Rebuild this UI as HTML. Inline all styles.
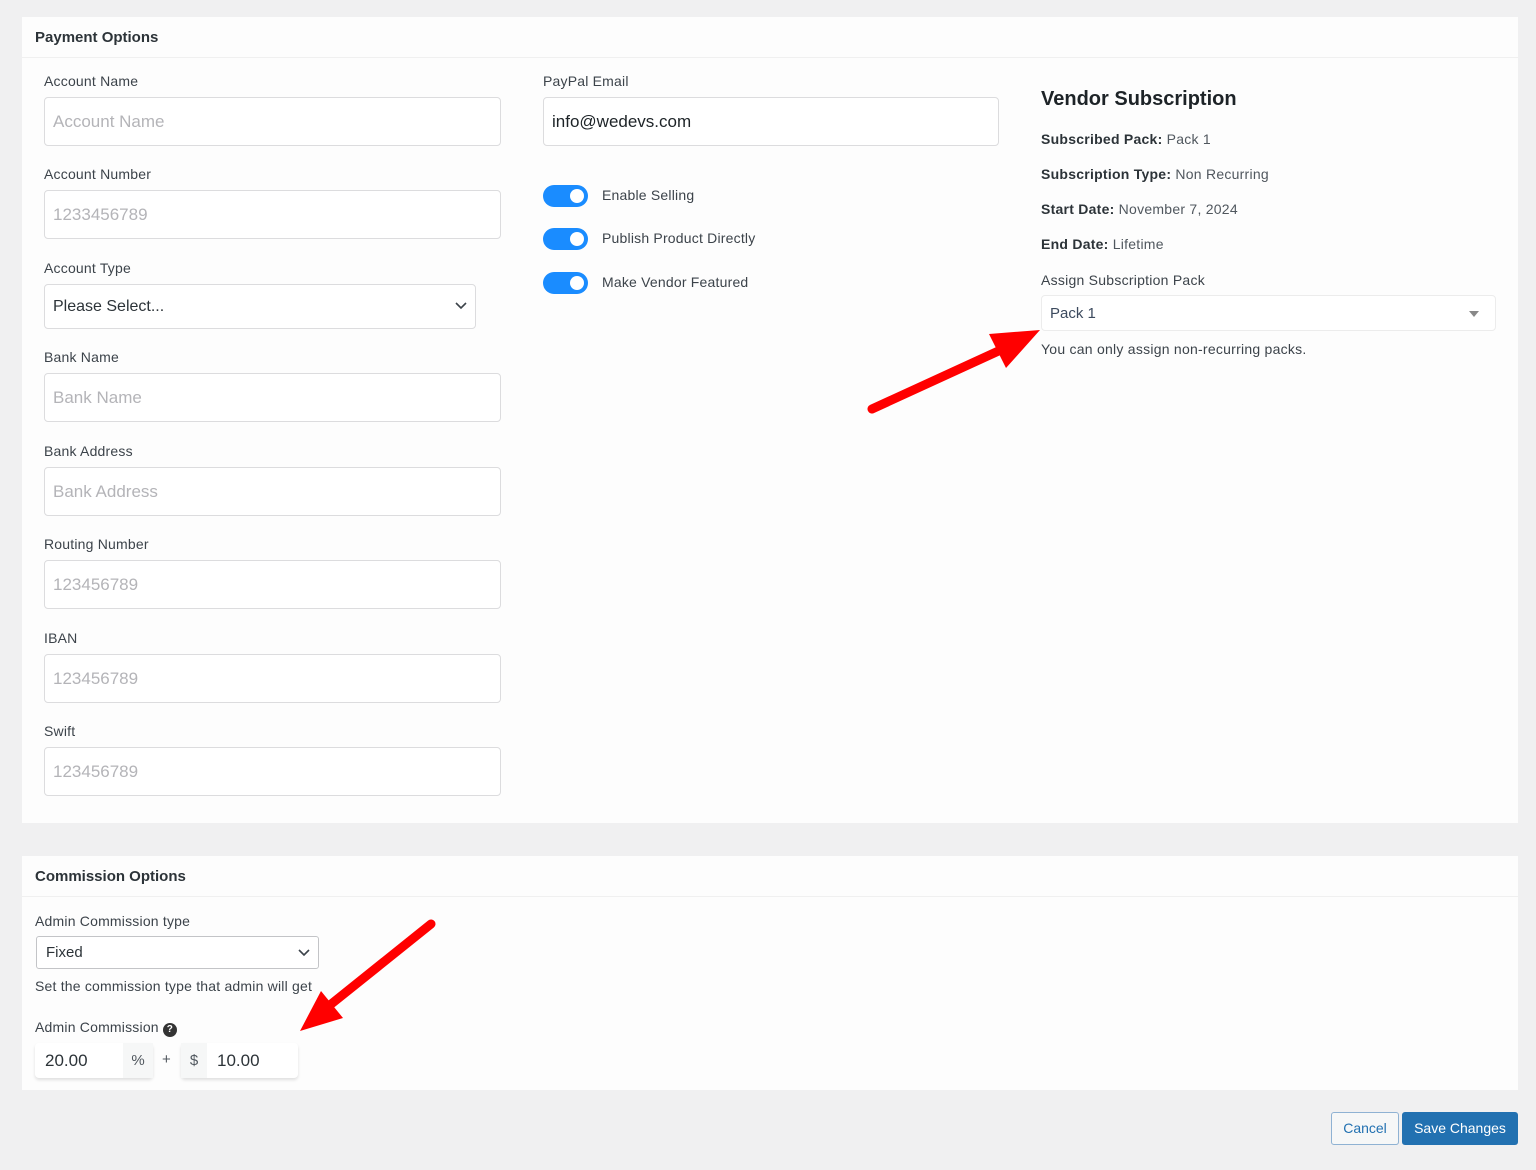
<!DOCTYPE html>
<html><head><meta charset="utf-8"><style>
*{box-sizing:border-box;margin:0;padding:0}
body{width:1536px;height:1170px;background:#f0f0f1;font-family:"Liberation Sans",sans-serif;color:#3c434a;position:relative;overflow:hidden}
.a{position:absolute}
.panel{position:absolute;left:22px;width:1496px;background:#fdfdfd}
.hdr{position:absolute;left:0;width:100%;border-bottom:1px solid #f0f0f0;font-weight:bold;font-size:15px;color:#2c3338;padding-left:13px}
.lbl{position:absolute;font-size:14px;color:#3c434a;letter-spacing:.2px}
.inp{position:absolute;left:44px;width:457px;height:49px;border:1px solid #dcdcde;border-radius:4px;background:#fff;font-size:17px;color:#b4b4b8;padding:14px 0 0 8px}
.tog{position:absolute;left:543px;width:45px;height:22px;border-radius:11px;background:#1a8cff}
.tog:after{content:"";position:absolute;right:4px;top:4px;width:14px;height:14px;border-radius:50%;background:#fff}
.tl{position:absolute;left:602px;font-size:14px;color:#3c434a;letter-spacing:.2px}
.vs{position:absolute;left:1041px;font-size:14px;color:#50575e;letter-spacing:.25px}
.vs b{color:#2c3338}
</style></head><body>
<div class="panel" style="top:17px;height:806px">
<div class="hdr" style="top:0;height:41px;line-height:41px">Payment Options</div>
</div>
<div class="lbl" style="left:44px;top:73px">Account Name</div>
<div class="inp" style="top:97px">Account Name</div>
<div class="lbl" style="left:44px;top:166px">Account Number</div>
<div class="inp" style="top:190px">1233456789</div>
<div class="lbl" style="left:44px;top:260px">Account Type</div>
<div class="inp" style="top:284px;width:432px;height:45px;color:#2c3338;font-size:16px;padding-top:13px">Please Select...
<svg class="a" style="right:8px;top:17px" width="12" height="8" viewBox="0 0 12 8"><path d="M1 1l5 5 5-5" stroke="#3c434a" stroke-width="1.6" fill="none"/></svg></div>
<div class="lbl" style="left:44px;top:349px">Bank Name</div>
<div class="inp" style="top:373px">Bank Name</div>
<div class="lbl" style="left:44px;top:443px">Bank Address</div>
<div class="inp" style="top:467px">Bank Address</div>
<div class="lbl" style="left:44px;top:536px">Routing Number</div>
<div class="inp" style="top:560px">123456789</div>
<div class="lbl" style="left:44px;top:630px">IBAN</div>
<div class="inp" style="top:654px">123456789</div>
<div class="lbl" style="left:44px;top:723px">Swift</div>
<div class="inp" style="top:747px">123456789</div>

<div class="lbl" style="left:543px;top:73px">PayPal Email</div>
<div class="inp" style="left:543px;top:97px;width:456px;color:#1d2327">info@wedevs.com</div>
<div class="tog" style="top:185px"></div><div class="tl" style="top:187px">Enable Selling</div>
<div class="tog" style="top:228px"></div><div class="tl" style="top:230px">Publish Product Directly</div>
<div class="tog" style="top:272px"></div><div class="tl" style="top:274px">Make Vendor Featured</div>

<div class="a" style="left:1041px;top:88px;font-size:20px;font-weight:bold;color:#1d2327">Vendor Subscription</div>
<div class="vs" style="top:131px"><b>Subscribed Pack:</b> Pack 1</div>
<div class="vs" style="top:166px"><b>Subscription Type:</b> Non Recurring</div>
<div class="vs" style="top:201px"><b>Start Date:</b> November 7, 2024</div>
<div class="vs" style="top:236px"><b>End Date:</b> Lifetime</div>
<div class="vs" style="top:272px;color:#3c434a">Assign Subscription Pack</div>
<div class="a" style="left:1041px;top:295px;width:455px;height:36px;border:1px solid #ececec;border-radius:4px;background:#fff;font-size:15px;color:#3c4a5e;padding:9px 0 0 8px">Pack 1
<svg class="a" style="right:16px;top:15px" width="10" height="6"><path d="M0 0h10L5 6z" fill="#888"/></svg></div>
<div class="vs" style="top:341px;color:#3c434a">You can only assign non-recurring packs.</div>

<div class="panel" style="top:856px;height:234px">
<div class="hdr" style="top:0;height:41px;line-height:41px">Commission Options</div>
</div>
<div class="lbl" style="left:35px;top:913px">Admin Commission type</div>
<div class="a" style="left:36px;top:936px;width:283px;height:33px;border:1px solid #c3c4c7;border-radius:3px;background:#fff;font-size:15px;color:#2c3338;padding:7px 0 0 9px">Fixed
<svg class="a" style="right:8px;top:12px" width="12" height="8" viewBox="0 0 12 8"><path d="M1 1l5 5 5-5" stroke="#3c434a" stroke-width="1.6" fill="none"/></svg></div>
<div class="lbl" style="left:35px;top:978px">Set the commission type that admin will get</div>
<div class="lbl" style="left:35px;top:1019px">Admin Commission <span style="display:inline-block;width:14px;height:14px;border-radius:50%;background:#333;color:#fff;font-size:10px;font-weight:bold;text-align:center;line-height:14px;vertical-align:0">?</span></div>
<div class="a" style="left:35px;top:1043px;width:118px;height:35px;background:#fff;border-radius:4px;box-shadow:0 2px 3px rgba(0,0,0,.12);font-size:17px;color:#2c3338;padding:8px 0 0 10px">20.00
<div class="a" style="left:88px;top:0;width:30px;height:35px;background:#f6f7f7;font-size:15px;text-align:center;line-height:35px;color:#50575e">%</div></div>
<div class="a" style="left:162px;top:1051px;font-size:15px;color:#50575e">+</div>
<div class="a" style="left:181px;top:1043px;width:117px;height:35px;background:#fff;border-radius:4px;box-shadow:0 2px 3px rgba(0,0,0,.12);font-size:17px;color:#2c3338;padding:8px 0 0 36px">10.00
<div class="a" style="left:0;top:0;width:26px;height:35px;background:#f6f7f7;font-size:15px;text-align:center;line-height:35px;color:#50575e">$</div></div>

<div class="a" style="left:1331px;top:1112px;width:68px;height:33px;border:1px solid #8fb2d3;border-radius:3px;background:#f6f7f7;color:#2271b1;font-size:14px;text-align:center;line-height:31px">Cancel</div>
<div class="a" style="left:1402px;top:1112px;width:116px;height:33px;border-radius:3px;background:#2271b1;color:#fff;font-size:14px;text-align:center;line-height:33px">Save Changes</div>

<svg class="a" style="left:0;top:0" width="1536" height="1170">
<line x1="872" y1="409" x2="1005" y2="348" stroke="#f00" stroke-width="9" stroke-linecap="round"/>
<path d="M1040 330L989 334L1006 368Z" fill="#f00"/>
<line x1="431" y1="924" x2="330" y2="1005" stroke="#f00" stroke-width="9" stroke-linecap="round"/>
<path d="M300 1031L321 991L343 1018Z" fill="#f00"/>
</svg>
</body></html>
